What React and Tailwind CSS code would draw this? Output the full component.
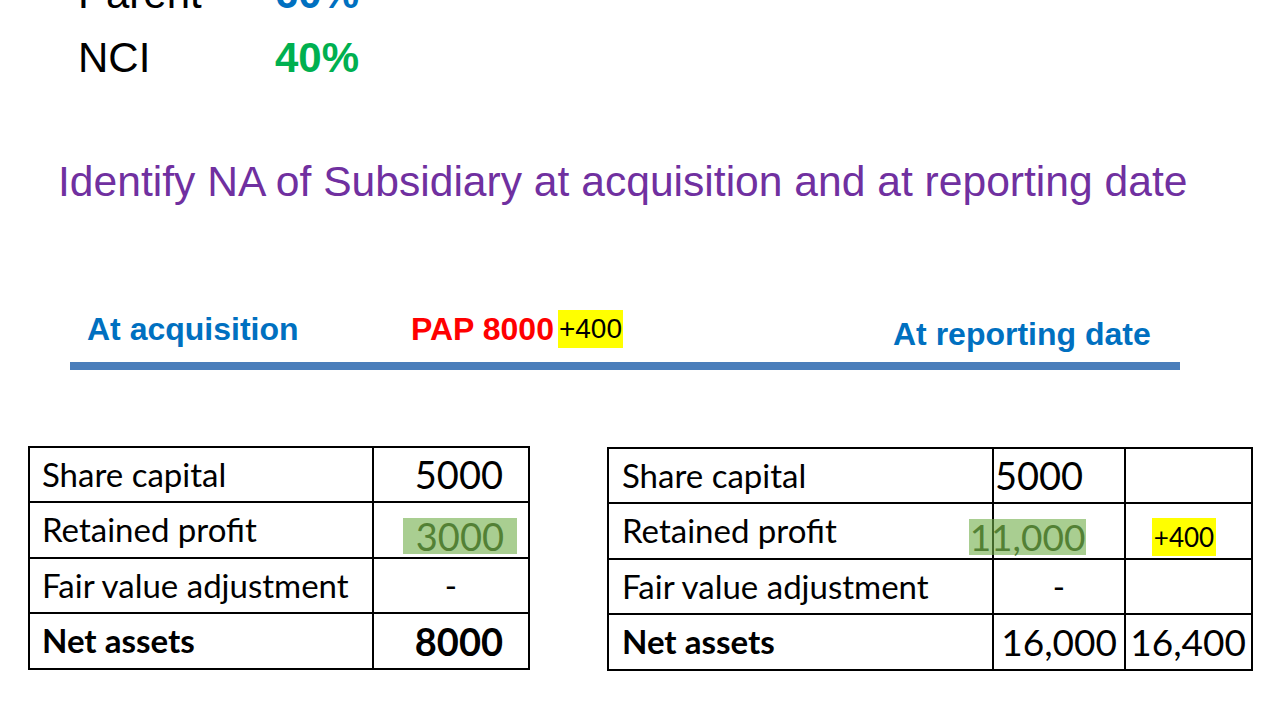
export default function App() {
  const arial = { fontFamily: '"Liberation Sans", Arial, sans-serif' };
  const cal = { fontFamily: 'Lato, "Open Sans", sans-serif' };
  return (
    <div className="w-[1280px] h-[720px] bg-white overflow-hidden" style={arial}>
      {/* Top percentages */}
      <div className="mt-[-38px] pl-[78px] grid grid-cols-[197px_auto] text-[42px] leading-[64px]">
        <div className="h-[64px] text-black">Parent</div>
        <div className="h-[64px] font-bold text-[#0070C0]">60%</div>
        <div className="h-[64px] text-black">NCI</div>
        <div className="h-[64px] font-bold text-[#00B050]">40%</div>
      </div>

      {/* Heading */}
      <div className="mt-[67px] pl-[58px] h-[48px] text-[42.6px] leading-[48px] text-[#7030A0] whitespace-nowrap">
        Identify NA of Subsidiary at acquisition and at reporting date
      </div>

      {/* Header row */}
      <div className="mt-[104px] h-[40px] flex items-start text-[32px] leading-[40px] font-bold">
        <div className="ml-[87px] w-[324px] text-[#0070C0]">At acquisition</div>
        <div className="text-[#FF0000]">PAP 8000</div>
        <div className="ml-[4px] mt-[1px] h-[38px] px-[1px] bg-[#FFFF00] text-black font-normal text-[28px] leading-[38px]">+400</div>
        <div className="ml-[270px] pt-[5px] text-[#0070C0]">At reporting date</div>
      </div>

      {/* Blue rule */}
      <div className="mt-[13px] ml-[70px] w-[1110px] h-[8px] bg-[#4a7ebb]" />

      {/* Tables */}
      <div className="mt-[76px] flex items-start" style={cal}>
        {/* Left table */}
        <div className="ml-[28px] grid grid-cols-[342px_154px] grid-rows-[53px_54px_53px_54px] gap-[2px] p-[2px] bg-black text-[33px] text-black">
          <div className="bg-white flex items-center pl-[12px]">Share capital</div>
          <div className="bg-white flex items-center justify-end pr-[25px] text-[38px]">5000</div>
          <div className="bg-white flex items-center pl-[12px]">Retained profit</div>
          <div className="bg-white flex items-end justify-end pr-[11px] pb-[3px]">
            <span className="h-[36px] px-[13px] flex items-center bg-[#70AD47]/60 text-[#538135] text-[38px]">3000</span>
          </div>
          <div className="bg-white flex items-center pl-[12px]">Fair value adjustment</div>
          <div className="bg-white flex items-center justify-center">-</div>
          <div className="bg-white flex items-center pl-[12px] font-bold">Net assets</div>
          <div className="bg-white flex items-center justify-end pr-[25px] font-bold text-[38px]">8000</div>
        </div>

        {/* Right table */}
        <div className="ml-[77px] mt-[1px] grid grid-cols-[383px_130px_125px] grid-rows-[53px_54px_53px_54px] gap-[2px] p-[2px] bg-black text-[33px] text-black">
          <div className="bg-white flex items-center pl-[13px]">Share capital</div>
          <div className="bg-white flex items-center pl-[1px] text-[38px]">5000</div>
          <div className="bg-white" />
          <div className="bg-white flex items-center pl-[13px]">Retained profit</div>
          <div className="bg-white flex items-end pb-[3px]">
            <span className="ml-[-25px] h-[36px] w-[117px] flex items-center justify-center bg-[#70AD47]/60 text-[#538135] text-[37px]">11,000</span>
          </div>
          <div className="bg-white flex items-end pb-[2px] pl-[26px]">
            <span className="h-[38px] w-[64px] flex items-center justify-center bg-[#FFFF00] text-[26px]">+400</span>
          </div>
          <div className="bg-white flex items-center pl-[13px]">Fair value adjustment</div>
          <div className="bg-white flex items-center justify-center">-</div>
          <div className="bg-white" />
          <div className="bg-white flex items-center pl-[13px] font-bold">Net assets</div>
          <div className="bg-white flex items-center justify-end pr-[7px] text-[37px]">16,000</div>
          <div className="bg-white flex items-center justify-end pr-[5px] text-[37px]">16,400</div>
        </div>
      </div>
    </div>
  );
}
